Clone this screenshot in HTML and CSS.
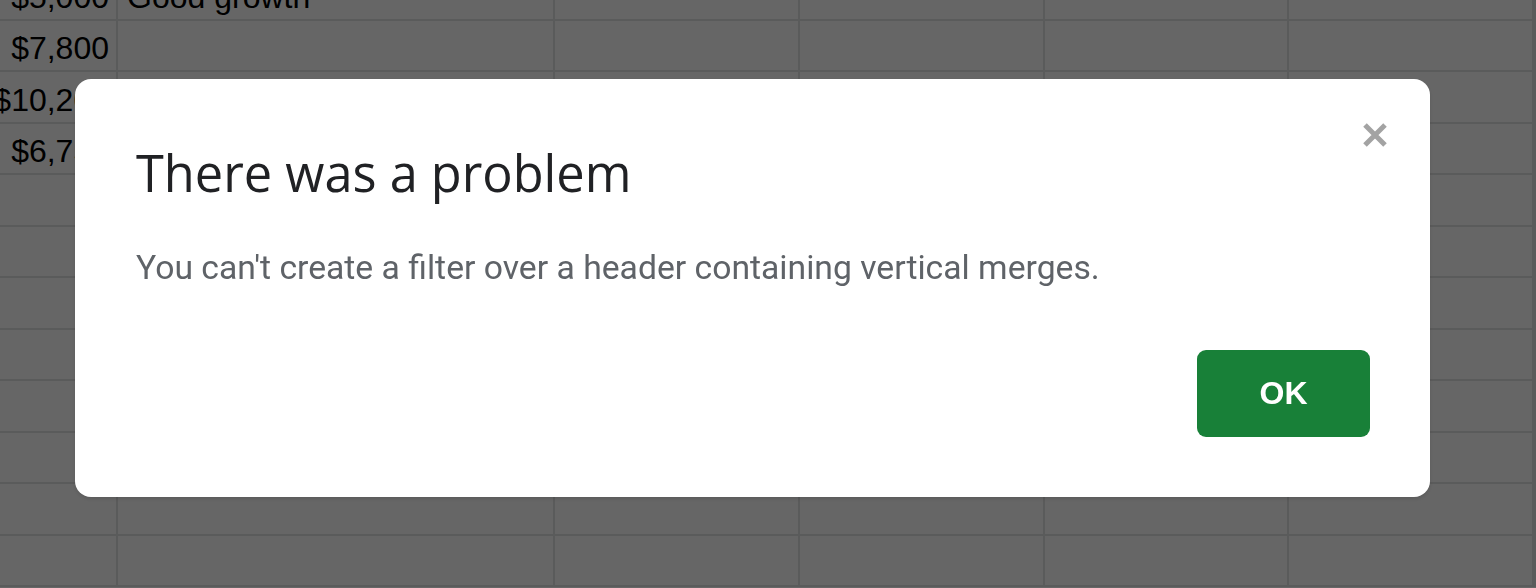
FILE: index.html
```html
<!DOCTYPE html>
<html lang="en">
<head>
<meta charset="utf-8">
<title>There was a problem</title>
<link rel="stylesheet" href="styles.css">
</head>
<body>
<div class="sheet">
  <div class="cell num">$5,000</div><div class="cell txt">Good growth</div><div class="cell"></div><div class="cell"></div><div class="cell"></div><div class="cell"></div><div class="cell"></div>
  <div class="cell num">$7,800</div><div class="cell"></div><div class="cell"></div><div class="cell"></div><div class="cell"></div><div class="cell"></div><div class="cell"></div>
  <div class="cell num">$10,200</div><div class="cell"></div><div class="cell"></div><div class="cell"></div><div class="cell"></div><div class="cell"></div><div class="cell"></div>
  <div class="cell num">$6,750</div><div class="cell"></div><div class="cell"></div><div class="cell"></div><div class="cell"></div><div class="cell"></div><div class="cell"></div>
  <div class="cell"></div><div class="cell"></div><div class="cell"></div><div class="cell"></div><div class="cell"></div><div class="cell"></div><div class="cell"></div>
  <div class="cell"></div><div class="cell"></div><div class="cell"></div><div class="cell"></div><div class="cell"></div><div class="cell"></div><div class="cell"></div>
  <div class="cell"></div><div class="cell"></div><div class="cell"></div><div class="cell"></div><div class="cell"></div><div class="cell"></div><div class="cell"></div>
  <div class="cell"></div><div class="cell"></div><div class="cell"></div><div class="cell"></div><div class="cell"></div><div class="cell"></div><div class="cell"></div>
  <div class="cell"></div><div class="cell"></div><div class="cell"></div><div class="cell"></div><div class="cell"></div><div class="cell"></div><div class="cell"></div>
  <div class="cell"></div><div class="cell"></div><div class="cell"></div><div class="cell"></div><div class="cell"></div><div class="cell"></div><div class="cell"></div>
  <div class="cell"></div><div class="cell"></div><div class="cell"></div><div class="cell"></div><div class="cell"></div><div class="cell"></div><div class="cell"></div>
  <div class="cell"></div><div class="cell"></div><div class="cell"></div><div class="cell"></div><div class="cell"></div><div class="cell"></div><div class="cell"></div>
</div>
<div class="overlay">
  <div class="dialog" role="alertdialog">
    <button class="close" aria-label="Close">
      <svg viewBox="0 0 26 26" width="26" height="26"><path d="M3 3 L23 23 M23 3 L3 23" stroke="#a3a3a3" stroke-width="5" stroke-linecap="butt"/></svg>
    </button>
    <h1 class="title">There was a problem</h1>
    <p class="message">You can't create a filter over a header containing vertical merges.</p>
    <div class="actions">
      <button class="ok">OK</button>
    </div>
  </div>
</div>
</body>
</html>
```
FILE: styles.css
```css
html, body {
  margin: 0;
  padding: 0;
  width: 1536px;
  height: 588px;
  overflow: hidden;
  background: #ffffff;
}

.sheet {
  display: grid;
  grid-template-columns: 118px 437px 245px 245px 244px 245px 1fr;
  grid-auto-rows: 51.5px;
  margin-top: -31px;
  font-family: "Liberation Sans", Arial, sans-serif;
  font-size: 32px;
  color: #000000;
}

.cell {
  box-sizing: border-box;
  border-right: 2px solid #e2e3e3;
  border-bottom: 2px solid #e2e3e3;
  display: flex;
  align-items: flex-end;
  line-height: 1;
  padding-bottom: 6px;
  white-space: nowrap;
  min-width: 0;
}

.num {
  justify-content: flex-end;
  padding-right: 7px;
}

.txt {
  padding-left: 9px;
  overflow: visible;
}

.overlay {
  position: fixed;
  inset: 0;
  background: rgba(0, 0, 0, 0.6);
  padding: 79px 106px 0 75px;
}

.dialog {
  position: relative;
  box-sizing: border-box;
  width: 1355px;
  height: 418px;
  background: #ffffff;
  border-radius: 16px;
  box-shadow: 0 2px 4px rgba(0, 0, 0, 0.12);
  padding: 60px 60px 60px 61px;
  display: flex;
  flex-direction: column;
}

.close {
  position: absolute;
  top: 43px;
  right: 42px;
  width: 26px;
  height: 26px;
  padding: 0;
  border: 0;
  background: transparent;
  display: flex;
}

.close svg {
  filter: blur(0.6px);
}

.title {
  margin: 0;
  font-family: "Open Sans", sans-serif;
  font-weight: 400;
  font-size: 50.5px;
  line-height: 68px;
  color: #202124;
}

.message {
  margin: 42px 0 0 0;
  font-family: Roboto, sans-serif;
  font-size: 33.7px;
  line-height: 38px;
  color: #5f6368;
}

.actions {
  margin-top: auto;
  display: flex;
  justify-content: flex-end;
}

.ok {
  width: 173px;
  height: 87px;
  border: 0;
  border-radius: 9px;
  background: #188038;
  color: #ffffff;
  font-family: "Liberation Sans", Arial, sans-serif;
  font-weight: 700;
  font-size: 32px;
  padding: 0;
}
```
